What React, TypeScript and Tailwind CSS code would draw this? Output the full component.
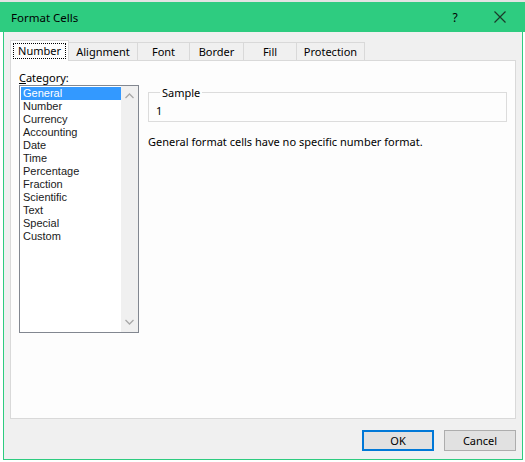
import React from 'react';

const categories = [
  'General', 'Number', 'Currency', 'Accounting', 'Date', 'Time',
  'Percentage', 'Fraction', 'Scientific', 'Text', 'Special', 'Custom',
];

const tabs = [
  { label: 'Number', w: 'w-[59px]' },
  { label: 'Alignment', w: 'w-[69px]' },
  { label: 'Font', w: 'w-[52px]' },
  { label: 'Border', w: 'w-[54px]' },
  { label: 'Fill', w: 'w-[53px]' },
  { label: 'Protection', w: 'w-[68px]' },
];

const App: React.FC = () => {
  return (
    <div className="w-[525px] h-[462px] bg-white flex flex-col text-[11px] text-black font-['Noto_Sans',sans-serif] leading-[15px]">
      <div className="h-[2px] bg-[#e3e3e3]" />

      {/* Title bar */}
      <div className="h-[30px] bg-[#2ecc80] flex items-center pl-[11px] text-[11.5px]">
        <span className="flex-1">Format Cells</span>
        <span className="w-[12px] text-center mr-[33px] text-[12px]">?</span>
        <svg width="12" height="12" viewBox="0 0 12 12" className="mr-[19px]">
          <path d="M0.5 0.5 L11.5 11.5 M11.5 0.5 L0.5 11.5" stroke="#1b3a2a" strokeWidth="1.2" />
        </svg>
      </div>

      {/* Body */}
      <div className="ml-[3px] w-[520px] h-[428px] border-x border-b border-[#2ecc80] bg-[#f0f0f0] flex flex-col pl-[6px] pt-[8px]">
        {/* Tabs */}
        <div className="flex items-end h-[21px] relative z-10">
          {tabs.map((t, i) =>
            i === 0 ? (
              <div key={t.label} className={`${t.w} h-[21px] bg-[#fdfdfd] border-x border-t border-[#d9d9d9] flex items-start justify-center pt-[2px]`}>
                <span className="border border-dotted border-black px-[4px] leading-[14px] h-[16px]">{t.label}</span>
              </div>
            ) : (
              <div key={t.label} className={`${t.w} h-[19px] bg-[#f0f0f0] border-t border-r border-[#d9d9d9] border-b flex items-center justify-center`}>
                {t.label}
              </div>
            )
          )}
        </div>

        {/* Panel */}
        <div className="w-[506px] h-[359px] -mt-[1px] bg-[#fdfdfd] border border-[#d9d9d9] flex pl-[8px] pt-[10px]">
          <div className="flex flex-col w-[120px]">
            <div className="leading-[14px]">
              <span className="underline">C</span>ategory:
            </div>
            <div className="h-[248px] border border-[#828790] bg-white flex">
              <div className="flex-1 flex flex-col pt-[1px] pl-[1px] font-['Liberation_Sans',sans-serif] text-[11px]">
                {categories.map((c, i) => (
                  <div
                    key={c}
                    className={`h-[13px] leading-[13px] pl-[2px] ${i === 0 ? 'bg-[#3399ff] text-white' : 'text-[#1a1a1a]'}`}
                  >
                    {c}
                  </div>
                ))}
              </div>
              <div className="w-[17px] bg-[#f0f0f0] flex flex-col items-center justify-between py-[7px]">
                <svg width="9" height="6" viewBox="0 0 9 6">
                  <path d="M0.5 5 L4.5 1 L8.5 5" stroke="#a8a8a8" strokeWidth="1.3" fill="none" />
                </svg>
                <svg width="9" height="6" viewBox="0 0 9 6">
                  <path d="M0.5 1 L4.5 5 L8.5 1" stroke="#a8a8a8" strokeWidth="1.3" fill="none" />
                </svg>
              </div>
            </div>
          </div>

          <div className="ml-[9px] w-[359px] flex flex-col pt-[14px]">
            <fieldset className="border border-[#dcdcdc] h-[37px] pl-[7px]">
              <legend className="ml-[4px] px-[2px] leading-[15px]">Sample</legend>
              <div className="leading-[15px] pt-[3px]">1</div>
            </fieldset>
            <div className="mt-[12px]">General format cells have no specific number format.</div>
          </div>
        </div>

        {/* Buttons */}
        <div className="flex justify-end w-[506px] gap-[10px] mt-[11px]">
          <button className="w-[72px] h-[21px] border-2 border-[#0078d7] bg-[#e1e1e1] flex items-center justify-center">OK</button>
          <button className="w-[72px] h-[21px] border border-[#adadad] bg-[#e1e1e1] flex items-center justify-center">Cancel</button>
        </div>
      </div>
    </div>
  );
};

export default App;
